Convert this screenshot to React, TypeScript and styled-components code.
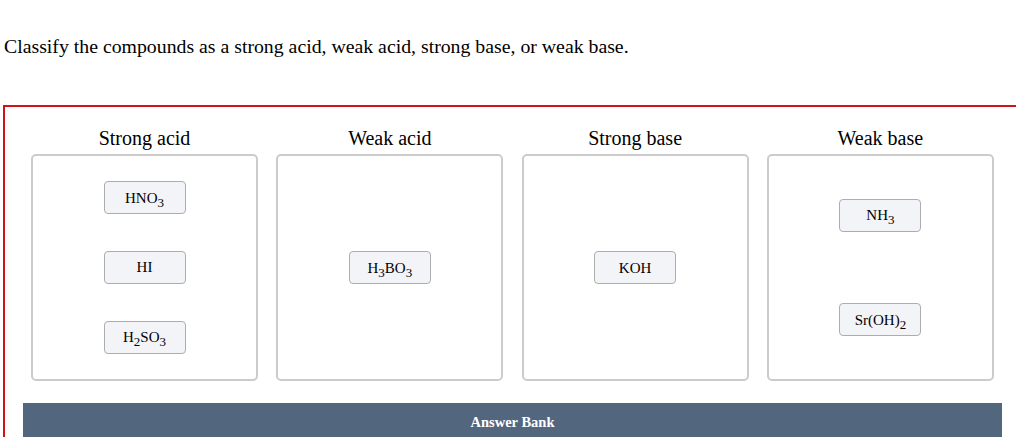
import React from "react";
import styled, { createGlobalStyle } from "styled-components";

const GlobalStyle = createGlobalStyle`
  html, body {
    margin: 0;
    padding: 0;
    background: #fff;
    overflow: hidden;
  }
  body {
    font-family: "Liberation Serif", "Times New Roman", serif;
    color: #000;
  }
`;

const Page = styled.div`
  padding-left: 3px;
  width: 1013px;
`;

const Prompt = styled.p`
  margin: 0;
  padding: 35px 0 0 1px;
  height: 105px;
  box-sizing: border-box;
  font-size: 19.8px;
  line-height: 23px;
`;

const Frame = styled.div`
  border-top: 2px solid #d0121b;
  border-left: 2px solid #d0121b;
  padding: 19px 0 0 0;
`;

const Columns = styled.div`
  display: grid;
  grid-template-columns: repeat(4, 227px);
  column-gap: 18.3px;
  margin-left: 26px;
  width: 962px;
`;

const Column = styled.div`
  display: flex;
  flex-direction: column;
  align-items: stretch;
`;

const Title = styled.div`
  font-size: 20px;
  line-height: 24px;
  text-align: center;
  margin-bottom: 4px;
`;

const DropBox = styled.div`
  box-sizing: border-box;
  height: 227px;
  border: 2px solid #cccccc;
  border-radius: 5px;
  padding: 7px 0;
  display: flex;
  flex-direction: column;
  justify-content: space-around;
  align-items: center;
`;

const Chip = styled.div`
  box-sizing: border-box;
  width: 82px;
  height: 33px;
  border: 1px solid #adadad;
  border-radius: 4px;
  background: #f3f4f8;
  font-size: 15px;
  display: flex;
  align-items: center;
  justify-content: center;
`;

const Formula = styled.span`
  line-height: 18px;
  sub {
    font-size: 13px;
    line-height: 0;
    vertical-align: -4px;
  }
`;

const Bank = styled.div`
  margin: 22px 0 0 18px;
  width: 979px;
  height: 40px;
  background: #52667e;
  color: #fff;
  font-weight: bold;
  font-size: 14.5px;
  display: flex;
  justify-content: center;
  padding-top: 11px;
  box-sizing: border-box;
`;

const columns: { title: string; items: React.ReactNode[] }[] = [
  {
    title: "Strong acid",
    items: [
      <>HNO<sub>3</sub></>,
      <>HI</>,
      <>H<sub>2</sub>SO<sub>3</sub></>,
    ],
  },
  {
    title: "Weak acid",
    items: [<>H<sub>3</sub>BO<sub>3</sub></>],
  },
  {
    title: "Strong base",
    items: [<>KOH</>],
  },
  {
    title: "Weak base",
    items: [<>NH<sub>3</sub></>, <>Sr(OH)<sub>2</sub></>],
  },
];

export default function App() {
  return (
    <>
      <GlobalStyle />
      <Page>
        <Prompt>
          Classify the compounds as a strong acid, weak acid, strong base, or weak base.
        </Prompt>
        <Frame>
          <Columns>
            {columns.map((col) => (
              <Column key={col.title}>
                <Title>{col.title}</Title>
                <DropBox>
                  {col.items.map((item, i) => (
                    <Chip key={i}>
                      <Formula>{item}</Formula>
                    </Chip>
                  ))}
                </DropBox>
              </Column>
            ))}
          </Columns>
          <Bank>Answer Bank</Bank>
        </Frame>
      </Page>
    </>
  );
}
